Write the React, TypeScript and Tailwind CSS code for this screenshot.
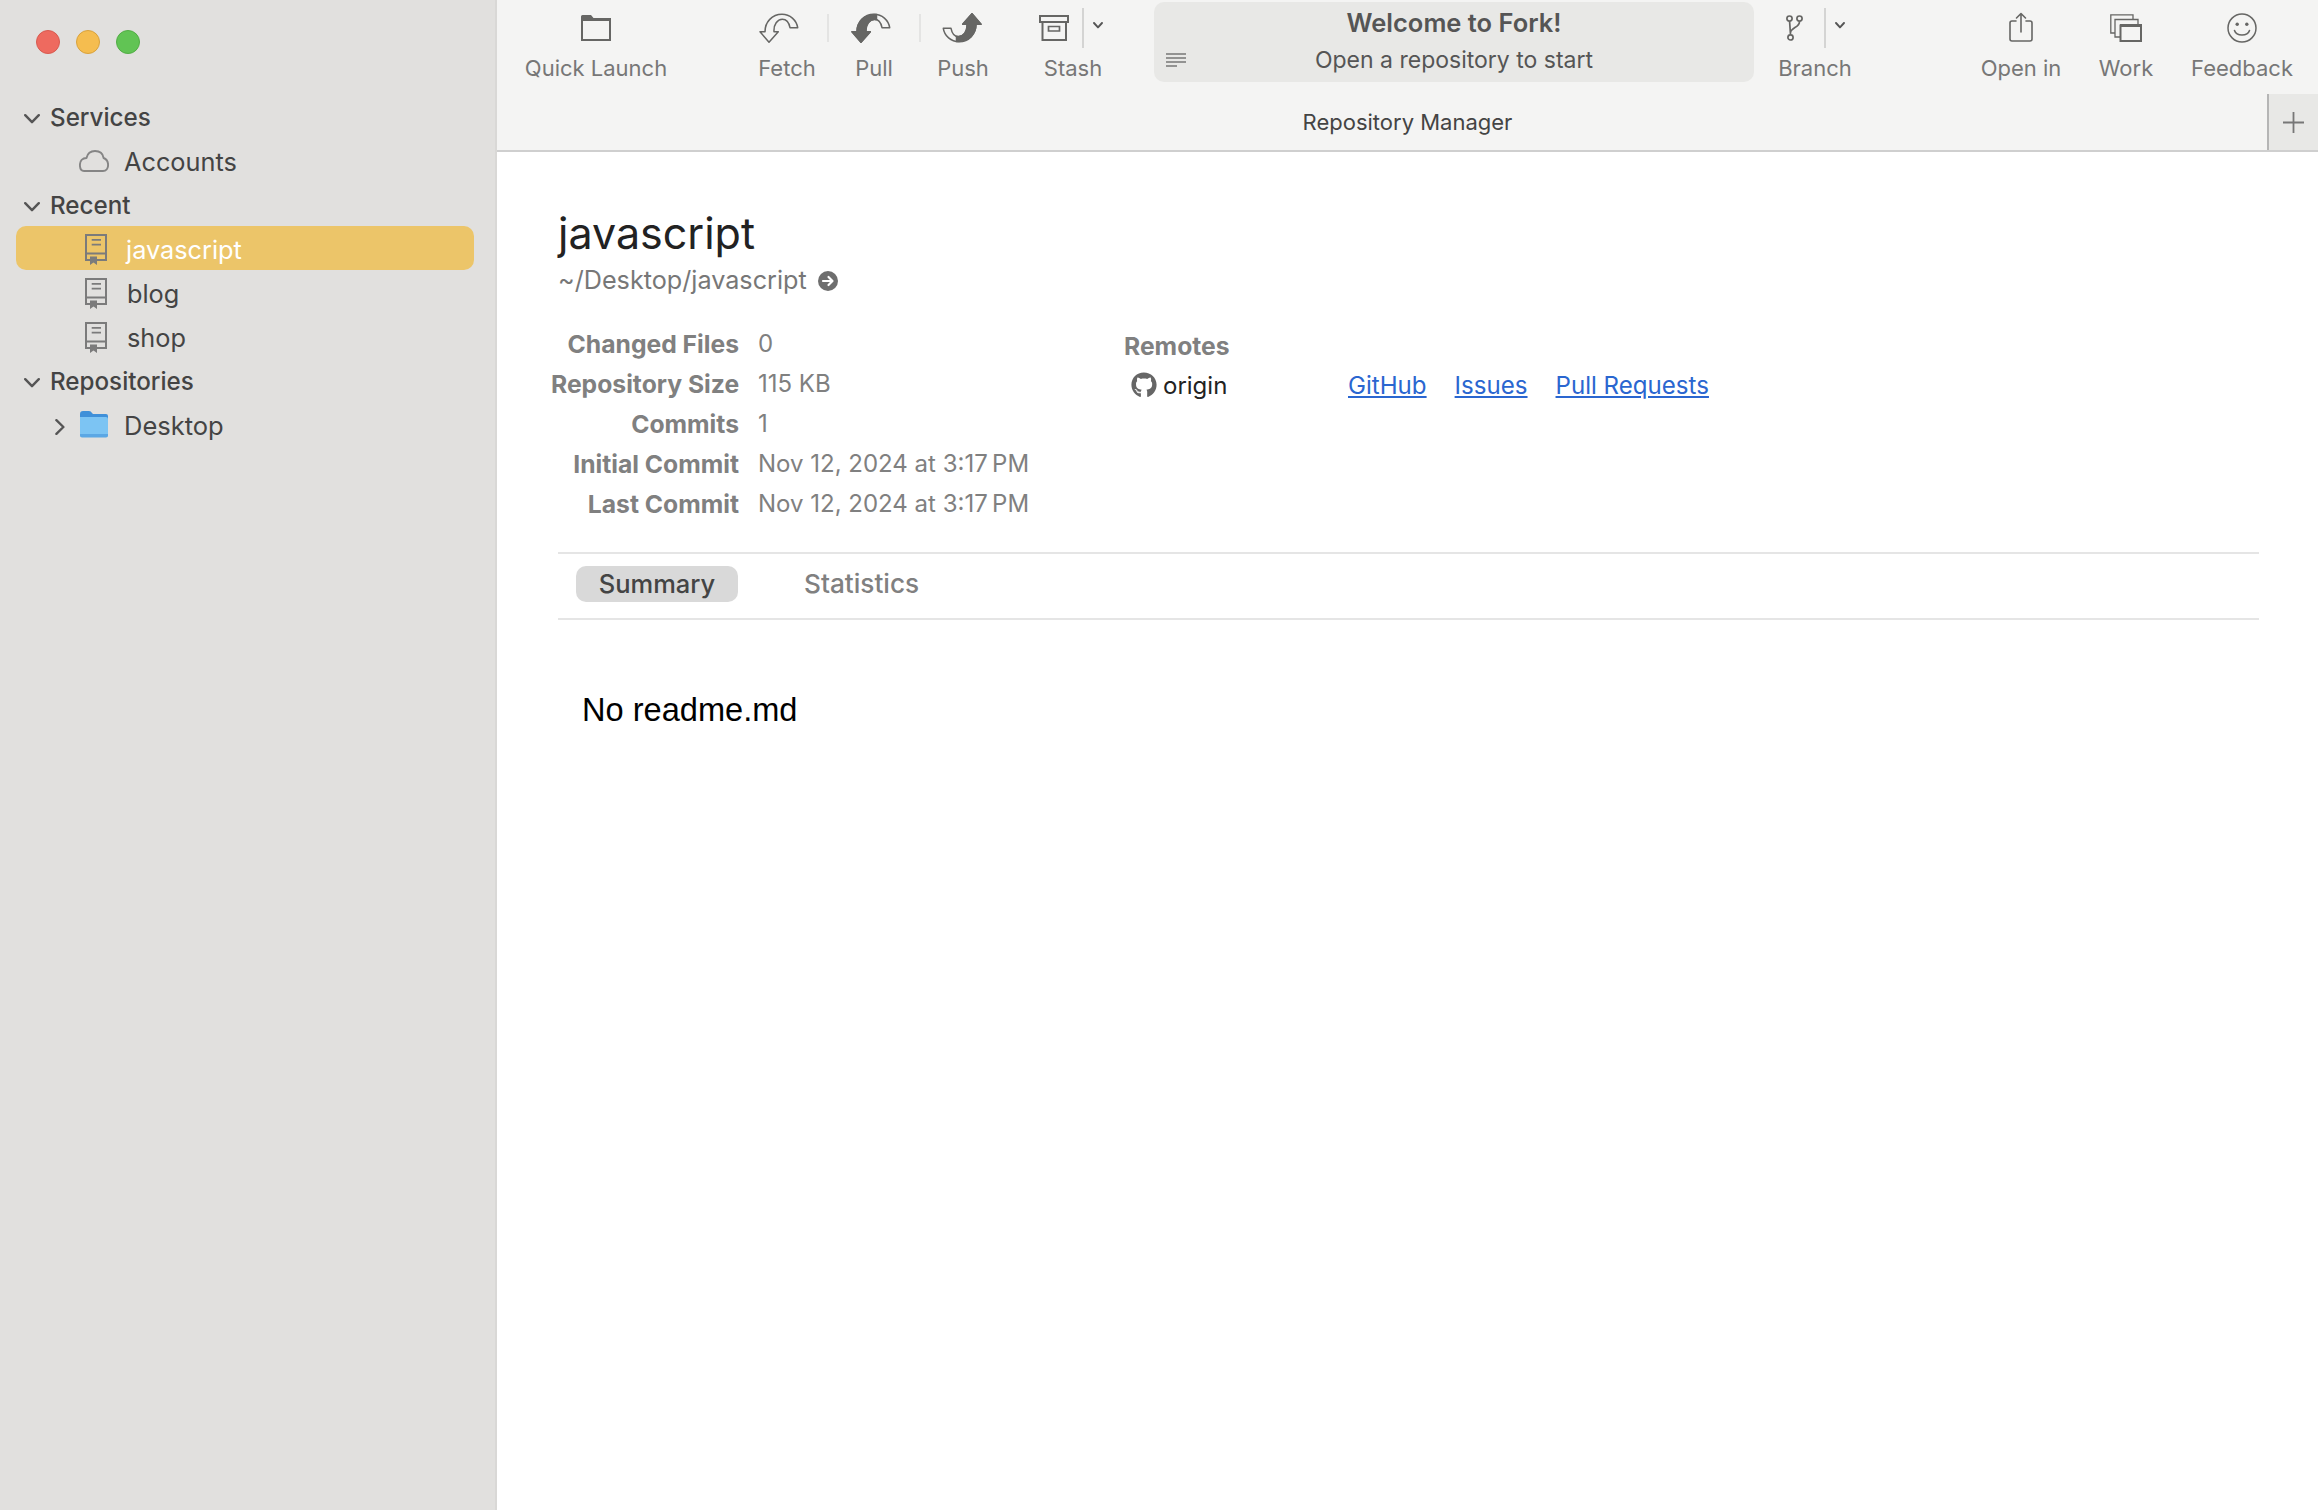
import React from "react";
import { FaGithub } from "react-icons/fa";

const Chevron = ({ down = true }: { down?: boolean }) =>
  down ? (
    <svg width="16" height="10" viewBox="0 0 16 10" className="mt-[5px] shrink-0">
      <path d="M1.2 1.2 L8 8.2 L14.8 1.2" fill="none" stroke="#555" strokeWidth="2.4" strokeLinecap="round" strokeLinejoin="round" />
    </svg>
  ) : (
    <svg width="10" height="16" viewBox="0 0 10 16" className="mt-[5px] shrink-0">
      <path d="M1.4 1.2 L8.4 8 L1.4 14.8" fill="none" stroke="#555" strokeWidth="2.4" strokeLinecap="round" strokeLinejoin="round" />
    </svg>
  );

const Book = ({ color = "#7b7b7b" }: { color?: string }) => (
  <svg width="22" height="31" viewBox="0 0 22 31" className="mt-[3px] shrink-0">
    <path d="M1 1 H21 V26 H1 Z M1 19.5 H21" fill="none" stroke={color} strokeWidth="2" />
    <path d="M6.7 5.8 H16 M6.7 10.6 H16" stroke={color} strokeWidth="1.7" />
    <path d="M5 22.5 H12 V31 L8.5 28.5 L5 31 Z" fill={color} />
  </svg>
);

const Cloud = () => (
  <svg width="30" height="22" viewBox="0 0 30 22" className="mt-px shrink-0">
    <path
      d="M5 21 C2 21 0.9 18 0.9 15 C0.9 11 3.5 8 7.5 8 C8.5 3.5 12 1 16 1 C21 1 24 4 24.6 8 C27.5 9 29.1 11.5 29.1 15 C29.1 18.5 27 21 24 21 Z"
      fill="none"
      stroke="#858585"
      strokeWidth="1.9"
      strokeLinejoin="round"
    />
  </svg>
);

const BlueFolder = () => (
  <svg width="28" height="27" viewBox="0 0 28 27" className="shrink-0">
    <path d="M0 3 Q0 0 3 0 H9 Q11 0 12 2 L13 3 H26 Q28 3 28 5 V12 H0 Z" fill="#3f90d9" />
    <path d="M0 6 H26 Q28 6 28 8 V24 Q28 26 26 26 H2 Q0 26 0 24 Z" fill="#7cc4f3" />
    <path d="M0 23 H28 V24.5 Q28 26.5 26 26.5 H2 Q0 26.5 0 24.5 Z" fill="#5ba7e4" />
  </svg>
);

const ic = "#666664";

const QuickIcon = () => (
  <svg width="30" height="26" viewBox="0 0 30 26">
    <path d="M1 5 H29 V25 H1 Z" fill="none" stroke={ic} strokeWidth="2" />
    <path d="M0 1.5 Q0 0 1.5 0 H10 L12.5 3 H30 V6 H0 Z" fill={ic} />
  </svg>
);

const bandFull =
  "M10 29.3 L1 18.7 H6 C6 9 13 1.3 23 1.3 C31 1.3 37.5 7 38.7 14.7 H31 C30 9.5 27 6.3 23.3 6.3 C18.5 6.3 14.5 11.5 15 18.7 H19.3 Z";
const bandHead =
  "M10 29.3 L1 18.7 H6 C6 9 13 1.3 25.5 1.5 L25.5 6.8 C18.5 5.5 14.5 11.5 15 18.7 H19.3 Z";

const FetchIcon = () => (
  <svg width="40" height="30" viewBox="0 0 40 30">
    <path d={bandFull} fill="none" stroke={ic} strokeWidth="1.5" strokeLinejoin="round" />
  </svg>
);
const PullIcon = ({ flip = false }: { flip?: boolean }) => (
  <svg width="40" height="30" viewBox="0 0 40 30">
    <g transform={flip ? "rotate(180 20 15)" : undefined}>
      <path d={bandFull} fill="none" stroke={ic} strokeWidth="1.5" strokeLinejoin="round" />
      <path d={bandHead} fill={ic} stroke={ic} strokeWidth="1.5" strokeLinejoin="round" />
    </g>
  </svg>
);

const StashIcon = () => (
  <svg width="30" height="26" viewBox="0 0 30 26" className="shrink-0">
    <path d="M1 1 H29 V7 H1 Z M3.5 7 V25 H27 V7" fill="none" stroke={ic} strokeWidth="2" />
    <path d="M9.5 11.5 H20.5 V16 H9.5 Z" fill="none" stroke={ic} strokeWidth="1.7" />
  </svg>
);

const BranchIcon = () => (
  <svg width="17" height="26" viewBox="0 0 17 26" className="shrink-0">
    <g fill="none" stroke={ic} strokeWidth="1.7">
      <circle cx="3.5" cy="3.6" r="2.6" />
      <circle cx="13.5" cy="3.6" r="2.6" />
      <circle cx="4.5" cy="22.4" r="2.6" />
      <path d="M3.6 6.4 L4.5 19.6 M13.5 6.4 C13.5 13 5 12 4.4 18" />
    </g>
  </svg>
);

const ShareIcon = () => (
  <svg width="24" height="30" viewBox="0 0 24 30" className="-mt-[3px]">
    <g fill="none" stroke={ic} strokeWidth="1.6" strokeLinecap="round" strokeLinejoin="round">
      <path d="M7 9 H3 Q1 9 1 11 V27 Q1 29 3 29 H21 Q23 29 23 27 V11 Q23 9 21 9 H17" />
      <path d="M12 20 V1.5 M7.5 6 L12 1.5 L16.5 6" />
    </g>
  </svg>
);

const WorkIcon = () => (
  <svg width="32" height="28" viewBox="0 0 32 28">
    <g fill="#f4f4f3" stroke={ic}>
      <path d="M0.8 0.8 H23 V19 H0.8 Z" strokeWidth="1.3" />
      <path d="M5 5.5 H28 V23 H5 Z" strokeWidth="1.3" />
      <path d="M10.5 11.5 H31 V27 H10.5 Z" strokeWidth="2" />
    </g>
    <path d="M10 10 H32 V13 H10 Z" fill={ic} />
  </svg>
);

const SmileIcon = () => (
  <svg width="30" height="30" viewBox="0 0 30 30">
    <circle cx="15" cy="15" r="14" fill="none" stroke={ic} strokeWidth="1.5" />
    <circle cx="10.2" cy="11.2" r="1.7" fill={ic} />
    <circle cx="19.8" cy="11.2" r="1.7" fill={ic} />
    <path d="M7.5 17.5 C9.5 23.5 20.5 23.5 22.5 17.5" fill="none" stroke={ic} strokeWidth="1.6" strokeLinecap="round" />
  </svg>
);

const MiniChevron = () => (
  <svg width="10" height="7" viewBox="0 0 10 7" className="shrink-0">
    <path d="M1 1 L5 5.4 L9 1" fill="none" stroke="#555" strokeWidth="1.9" strokeLinecap="round" strokeLinejoin="round" />
  </svg>
);

const Section = ({ label }: { label: string }) => (
  <div className="flex h-[44px] items-center pl-[24px]">
    <Chevron />
    <span className="ml-[10px] pt-[4px] text-[24.2px] leading-[36px] font-medium text-[#444]">{label}</span>
  </div>
);

const Tool = ({
  label,
  width,
  margin,
  icon,
  iconClass = "",
}: {
  label: string;
  width: string;
  margin: string;
  icon: React.ReactNode;
  iconClass?: string;
}) => (
  <div className={`flex shrink-0 flex-col items-center ${width} ${margin}`}>
    <div className={`flex h-[56px] items-center ${iconClass}`}>{icon}</div>
    <span className="text-[22px] leading-[24px] whitespace-nowrap text-[#777]">{label}</span>
  </div>
);

const ToolSplit = ({
  label,
  width,
  margin,
  icon,
  pad,
  sep,
  chev,
}: {
  label: string;
  width: string;
  margin: string;
  icon: React.ReactNode;
  pad: string;
  sep: string;
  chev: string;
}) => (
  <div className={`flex shrink-0 flex-col items-center ${width} ${margin}`}>
    <div className={`flex h-[56px] w-full items-center ${pad}`}>
      {icon}
      <span className={`h-[40px] w-[2px] shrink-0 bg-[#d4d4d3] ${sep}`} />
      <span className={`${chev} -mt-[6px]`}>
        <MiniChevron />
      </span>
    </div>
    <span className="text-[22px] leading-[24px] whitespace-nowrap text-[#777]">{label}</span>
  </div>
);

const Sep = ({ className }: { className: string }) => (
  <span className={`mt-[14px] h-[28px] w-[2px] shrink-0 bg-[#e4e4e3] ${className}`} />
);

const stats: [string, string][] = [
  ["Changed Files", "0"],
  ["Repository Size", "115 KB"],
  ["Commits", "1"],
  ["Initial Commit", "Nov 12, 2024 at 3:17\u202fPM"],
  ["Last Commit", "Nov 12, 2024 at 3:17\u202fPM"],
];

export default function App() {
  return (
    <div className="flex h-[1510px] w-[2318px] overflow-hidden bg-white font-[Inter,sans-serif]">
      <aside className="flex w-[497px] shrink-0 flex-col border-r-2 border-[#d9d8d6] bg-[#e1e0de]">
        <div className="flex h-[94px] gap-[16px] pt-[30px] pl-[36px]">
          <span className="h-[24px] w-[24px] rounded-full border border-[#d85a4f] bg-[#ee6a5f]" />
          <span className="h-[24px] w-[24px] rounded-full border border-[#d9a23c] bg-[#f5bd4f]" />
          <span className="h-[24px] w-[24px] rounded-full border border-[#52ad45] bg-[#61c454]" />
        </div>
        <Section label="Services" />
        <div className="flex h-[44px] items-center">
          <span className="ml-[79px] flex">
            <Cloud />
          </span>
          <span className="ml-[15px] pt-[4px] text-[25.3px] leading-[36px] text-[#444]">Accounts</span>
        </div>
        <Section label="Recent" />
        <div className="mx-[16px] flex h-[44px] w-[458px] items-center rounded-[10px] bg-[#ecc569]">
          <span className="ml-[69px] flex">
            <Book />
          </span>
          <span className="ml-[19px] pt-[4px] text-[25.3px] leading-[36px] text-white">javascript</span>
        </div>
        {["blog", "shop"].map((n) => (
          <div key={n} className="flex h-[44px] items-center pl-[85px]">
            <Book />
            <span className="ml-[20px] pt-[4px] text-[25.3px] leading-[36px] text-[#444]">{n}</span>
          </div>
        ))}
        <Section label="Repositories" />
        <div className="flex h-[44px] items-center pl-[55px]">
          <Chevron down={false} />
          <span className="ml-[15px] flex">
            <BlueFolder />
          </span>
          <span className="ml-[16px] pt-[4px] text-[25.5px] leading-[36px] text-[#444]">Desktop</span>
        </div>
      </aside>

      <main className="flex min-w-0 flex-1 flex-col">
        <header className="shrink-0 border-b-2 border-[#cfcfcf] bg-[#f4f4f3]">
          <div className="flex h-[94px] items-start">
            <Tool label="Quick Launch" width="w-[160px]" margin="ml-[19px]" icon={<QuickIcon />} />
            <Tool label="Fetch" width="w-[70px]" margin="ml-[76px]" icon={<FetchIcon />} iconClass="mr-[16px]" />
            <Sep className="ml-[5px]" />
            <Tool label="Pull" width="w-[60px]" margin="ml-[15px]" icon={<PullIcon />} iconClass="mr-[6px]" />
            <Sep className="ml-[15px]" />
            <Tool label="Push" width="w-[70px]" margin="ml-[7px]" icon={<PullIcon flip />} iconClass="mr-[2px]" />
            <ToolSplit label="Stash" width="w-[70px]" margin="ml-[40px]" icon={<StashIcon />} pad="pl-[1px]" sep="ml-[13px]" chev="ml-[9px]" />
            <div className="relative mt-[2px] ml-[46px] flex h-[80px] w-[600px] shrink-0 flex-col items-center rounded-[10px] bg-[#e8e8e6] text-[#555]">
              <span className="mt-[6px] text-[25.5px] leading-[30px] font-semibold">Welcome to Fork!</span>
              <span className="mt-[8px] text-[23px] leading-[28px]">Open a repository to start</span>
              <svg width="20" height="14" viewBox="0 0 20 14" className="absolute top-[51px] left-[12px]">
                <path d="M0 1 H20 M0 5 H20 M0 9 H20 M0 13 H11" stroke="#777" strokeWidth="1.7" />
              </svg>
            </div>
            <ToolSplit label="Branch" width="w-[80px]" margin="ml-[21px]" icon={<BranchIcon />} pad="pl-[11px]" sep="ml-[21px]" chev="ml-[9px]" />
            <Tool label="Open in" width="w-[90px]" margin="ml-[121px]" icon={<ShareIcon />} />
            <Tool label="Work" width="w-[60px]" margin="ml-[30px]" icon={<WorkIcon />} />
            <Tool label="Feedback" width="w-[110px]" margin="ml-[31px]" icon={<SmileIcon />} />
          </div>
          <div className="flex h-[56px]">
            <div className="flex flex-1 items-center justify-center pl-[51px] text-[22px] text-[#444]">Repository Manager</div>
            <div className="flex w-[51px] items-center justify-center border-l-2 border-[#b5b5b5] bg-[#e8e8e6]">
              <svg width="21" height="21" viewBox="0 0 21 21">
                <path d="M10.5 0 V21 M0 10.5 H21" stroke="#777" strokeWidth="1.8" />
              </svg>
            </div>
          </div>
        </header>

        <section className="flex flex-col pt-[57px] pr-[59px] pl-[61px]">
          <h1 className="text-[43px] leading-[48px] text-[#222]">javascript</h1>
          <div className="mt-[8px] flex h-[32px] items-center text-[25.2px] text-[#777]">
            <span>~/Desktop/javascript</span>
            <svg width="20" height="20" viewBox="0 0 20 20" className="ml-[11px]">
              <circle cx="10" cy="10" r="10" fill="#6e6e6e" />
              <path d="M5 10 H14 M10.5 6 L14.5 10 L10.5 14" fill="none" stroke="#fff" strokeWidth="2.2" strokeLinecap="round" strokeLinejoin="round" />
            </svg>
          </div>

          <div className="mt-[27px] -ml-[7px] flex">
            <div className="grid w-[573px] shrink-0 grid-cols-[188px_1fr] gap-x-[19px]">
              {stats.map(([k, v]) => (
                <React.Fragment key={k}>
                  <span className="text-right text-[24.7px] leading-[40px] font-bold whitespace-nowrap text-[#808080]">{k}</span>
                  <span className="text-[24px] leading-[40px] whitespace-nowrap text-[#808080]">{v}</span>
                </React.Fragment>
              ))}
            </div>
            <div className="flex flex-col pt-[2px]">
              <span className="text-[24.7px] leading-[40px] font-bold text-[#808080]">Remotes</span>
              <div className="flex h-[40px] items-center pl-[7px]">
                <FaGithub className="-mt-[3px] h-[26px] w-[26px] shrink-0 text-[#666]" />
                <span className="ml-[6px] w-[185px] text-[24px] text-[#222]">origin</span>
                <div className="flex gap-[28px] text-[24.1px] text-[#2a66d0] underline">
                  <span>GitHub</span>
                  <span>Issues</span>
                  <span>Pull Requests</span>
                </div>
              </div>
            </div>
          </div>

          <div className="mt-[28px] flex h-[68px] items-center border-y-2 border-[#e5e5e5] pb-[4px] pl-[18px]">
            <span className="flex h-[36px] w-[162px] items-center justify-center rounded-[10px] bg-[#d9d9d9] text-[25.5px] font-medium text-[#444]">Summary</span>
            <span className="ml-[66px] text-[26.2px] font-medium text-[#808080]">Statistics</span>
          </div>

          <p className="mt-[70px] pl-[24px] font-['Liberation_Sans',sans-serif] text-[32.6px] leading-[40px] text-black">No readme.md</p>
        </section>
      </main>
    </div>
  );
}
